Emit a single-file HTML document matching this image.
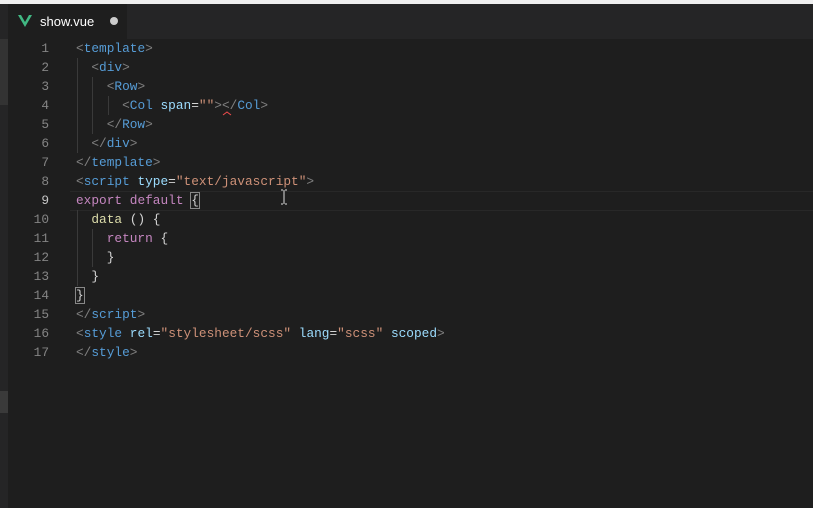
<!DOCTYPE html>
<html><head><meta charset="utf-8"><style>
html,body{margin:0;padding:0;width:813px;height:508px;overflow:hidden;background:#1e1e1e;}
.top{position:absolute;left:0;top:0;width:813px;height:4px;background:#f0f0f0;}
.tabbar{position:absolute;left:0;top:4px;width:813px;height:35px;background:#252526;}
.tab{position:absolute;left:8px;top:0;width:119px;height:35px;background:#1e1e1e;font-family:"Liberation Sans",sans-serif;font-size:13px;color:#fff;}
.tab .name{position:absolute;left:32px;top:10px;}
.tab .dot{position:absolute;left:102px;top:13px;width:8px;height:8px;border-radius:50%;background:#ccc;}
.strip{position:absolute;left:0;top:39px;width:8px;height:469px;background:#252526;}
.s1{position:absolute;left:0;top:39px;width:8px;height:66px;background:#333;}
.s2{position:absolute;left:0;top:391px;width:8px;height:22px;background:#3a3a3a;}
.cur{position:absolute;left:70px;top:191px;width:743px;height:18px;border-top:1px solid #282828;border-bottom:1px solid #282828;}
.code{position:absolute;left:0;top:39px;font-family:"Liberation Mono",monospace;font-size:12.8px;line-height:19px;white-space:pre;color:#d4d4d4;}
.ln{display:inline-block;width:49px;text-align:right;color:#858585;margin-right:27px;}
.ln.a{color:#c6c6c6;}
.g{color:#808080}.t{color:#569cd6}.at{color:#9cdcfe}.s{color:#ce9178}.k{color:#c586c0}.f{color:#dcdcaa}.y{color:#d4d4d4}
.guide{position:absolute;width:1px;background:#3a3a3a;}
.bm{outline:1px solid #888;}
</style></head><body>
<div class="top"></div>
<div class="tabbar"><div class="tab">
<svg style="position:absolute;left:10px;top:11px" width="14" height="12" viewBox="0 0 14 12"><path d="M0 0 L3 0 L7 7 L11 0 L14 0 L7 12 Z" fill="#41b883"/></svg>
<span class="name">show.vue</span><span class="dot"></span></div></div>
<div class="strip"></div><div class="s1"></div><div class="s2"></div>
<div class="cur"></div>
<div class="guide" style="left:77px;top:58px;height:95px"></div>
<div class="guide" style="left:92px;top:77px;height:57px"></div>
<div class="guide" style="left:108px;top:96px;height:19px"></div>
<div class="guide" style="left:77px;top:210px;height:76px"></div>
<div class="guide" style="left:92px;top:229px;height:38px"></div>
<div class="code"><span class="ln">1</span><span class="g">&lt;</span><span class="t">template</span><span class="g">&gt;</span>
<span class="ln">2</span>  <span class="g">&lt;</span><span class="t">div</span><span class="g">&gt;</span>
<span class="ln">3</span>    <span class="g">&lt;</span><span class="t">Row</span><span class="g">&gt;</span>
<span class="ln">4</span>      <span class="g">&lt;</span><span class="t">Col</span> <span class="at">span</span><span class="y">=</span><span class="s">""</span><span class="g">&gt;&lt;/</span><span class="t">Col</span><span class="g">&gt;</span>
<span class="ln">5</span>    <span class="g">&lt;/</span><span class="t">Row</span><span class="g">&gt;</span>
<span class="ln">6</span>  <span class="g">&lt;/</span><span class="t">div</span><span class="g">&gt;</span>
<span class="ln">7</span><span class="g">&lt;/</span><span class="t">template</span><span class="g">&gt;</span>
<span class="ln">8</span><span class="g">&lt;</span><span class="t">script</span> <span class="at">type</span><span class="y">=</span><span class="s">"text/javascript"</span><span class="g">&gt;</span>
<span class="ln a">9</span><span class="k">export</span> <span class="k">default</span> <span class="y bm">{</span>
<span class="ln">10</span>  <span class="f">data</span> <span class="y">() {</span>
<span class="ln">11</span>    <span class="k">return</span> <span class="y">{</span>
<span class="ln">12</span>    <span class="y">}</span>
<span class="ln">13</span>  <span class="y">}</span>
<span class="ln">14</span><span class="y bm">}</span>
<span class="ln">15</span><span class="g">&lt;/</span><span class="t">script</span><span class="g">&gt;</span>
<span class="ln">16</span><span class="g">&lt;</span><span class="t">style</span> <span class="at">rel</span><span class="y">=</span><span class="s">"stylesheet/scss"</span> <span class="at">lang</span><span class="y">=</span><span class="s">"scss"</span> <span class="at">scoped</span><span class="g">&gt;</span>
<span class="ln">17</span><span class="g">&lt;/</span><span class="t">style</span><span class="g">&gt;</span></div>
<svg style="position:absolute;left:222px;top:111px" width="10" height="5"><path d="M1 4 L5 1 L9 4" stroke="#f14c4c" fill="none"/></svg>
<svg style="position:absolute;left:280px;top:189px" width="8" height="16"><path d="M1 1 H3 M5 1 H7 M4 1 V15 M1 15 H3 M5 15 H7" stroke="#ddd" fill="none"/></svg>
</body></html>
